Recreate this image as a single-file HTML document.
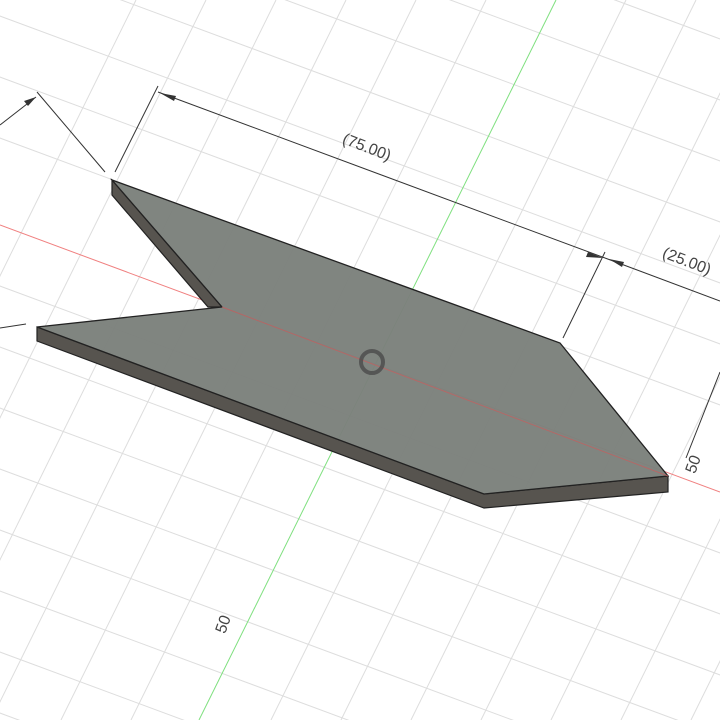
<!DOCTYPE html>
<html><head><style>html,body{margin:0;padding:0;background:#fff;overflow:hidden}svg{display:block}</style></head>
<body>
<svg width="720" height="720" viewBox="0 0 720 720" xmlns="http://www.w3.org/2000/svg" font-family="Liberation Sans, sans-serif">
<rect width="720" height="720" fill="#fff"/>
<g stroke="#dddddd" stroke-width="1">
<line x1="-100" y1="-265" x2="820" y2="76"/>
<line x1="-100" y1="-204" x2="820" y2="137"/>
<line x1="-100" y1="-143" x2="820" y2="198"/>
<line x1="-100" y1="-82" x2="820" y2="259"/>
<line x1="-100" y1="-21" x2="820" y2="320"/>
<line x1="-100" y1="40" x2="820" y2="381"/>
<line x1="-100" y1="101" x2="820" y2="442"/>
<line x1="-100" y1="249" x2="820" y2="590"/>
<line x1="-100" y1="310" x2="820" y2="651"/>
<line x1="-100" y1="371" x2="820" y2="712"/>
<line x1="-100" y1="432" x2="820" y2="773"/>
<line x1="-100" y1="493" x2="820" y2="834"/>
<line x1="-100" y1="554" x2="820" y2="895"/>
<line x1="-100" y1="615" x2="820" y2="956"/>
<line x1="-100" y1="676" x2="820" y2="1017"/>
<line x1="-100" y1="737" x2="820" y2="1078"/>
<line x1="206" y1="0" x2="-149" y2="720"/>
<line x1="276" y1="0" x2="-79" y2="720"/>
<line x1="346" y1="0" x2="-9" y2="720"/>
<line x1="416" y1="0" x2="61" y2="720"/>
<line x1="486" y1="0" x2="131" y2="720"/>
<line x1="626" y1="0" x2="271" y2="720"/>
<line x1="696" y1="0" x2="341" y2="720"/>
<line x1="766" y1="0" x2="411" y2="720"/>
<line x1="836" y1="0" x2="481" y2="720"/>
<line x1="906" y1="0" x2="551" y2="720"/>
<line x1="976" y1="0" x2="621" y2="720"/>
<line x1="1046" y1="0" x2="691" y2="720"/>
<line x1="1116" y1="0" x2="761" y2="720"/>
<line x1="136" y1="0" x2="-219" y2="720"/>
</g>
<line x1="0" y1="225" x2="720" y2="492" stroke="#f08080" stroke-width="1"/>
<line x1="556" y1="0" x2="199" y2="720" stroke="#7fe07f" stroke-width="1"/>
<polygon points="37,327 37,341 484,508 668,492 668,476 484,494" fill="#57544f" stroke="#222" stroke-width="1.2"/>
<polygon points="112,180 112,195 208,307 222,307" fill="#57544f" stroke="#222" stroke-width="1.2"/>
<polygon points="112,180 560,343 668,476 484,494 37,327 222,307" fill="#7c817c" fill-opacity="0.97" stroke="#222" stroke-width="1.3"/>
<line x1="222" y1="307" x2="668" y2="476" stroke="#c26060" stroke-width="1" opacity="0.8"/>
<circle cx="372" cy="362" r="11" fill="none" stroke="#4a4a4a" stroke-width="4" opacity="0.8"/>
<g stroke="#333" stroke-width="1" fill="none">
<line x1="158" y1="86" x2="115" y2="172"/>
<line x1="158" y1="92" x2="605" y2="258"/>
<line x1="605" y1="252" x2="563" y2="338"/>
<line x1="605" y1="258" x2="720" y2="301"/>
<line x1="37" y1="92" x2="105" y2="172"/>
<line x1="0" y1="125" x2="36" y2="97"/>
<line x1="0" y1="328" x2="26" y2="324"/>
<line x1="720" y1="372" x2="686" y2="458"/>
</g>
<g fill="#333">
<polygon points="160,93 176,96 174,101"/>
<polygon points="603,258 588,252 586,257"/>
<polygon points="609,259 624,262 622,267"/>
<polygon points="36,97 24,101 28,106"/>
</g>
<g fill="#444" font-size="16">
<text x="365" y="152" transform="rotate(21 365 152)" text-anchor="middle">(75.00)</text>
<text x="685" y="266" transform="rotate(21 685 266)" text-anchor="middle">(25.00)</text>
<text x="698" y="466" transform="rotate(-70 698 466)" text-anchor="middle">50</text>
<text x="228" y="626" transform="rotate(-70 228 626)" text-anchor="middle">50</text>
</g>
</svg>
</body></html>
